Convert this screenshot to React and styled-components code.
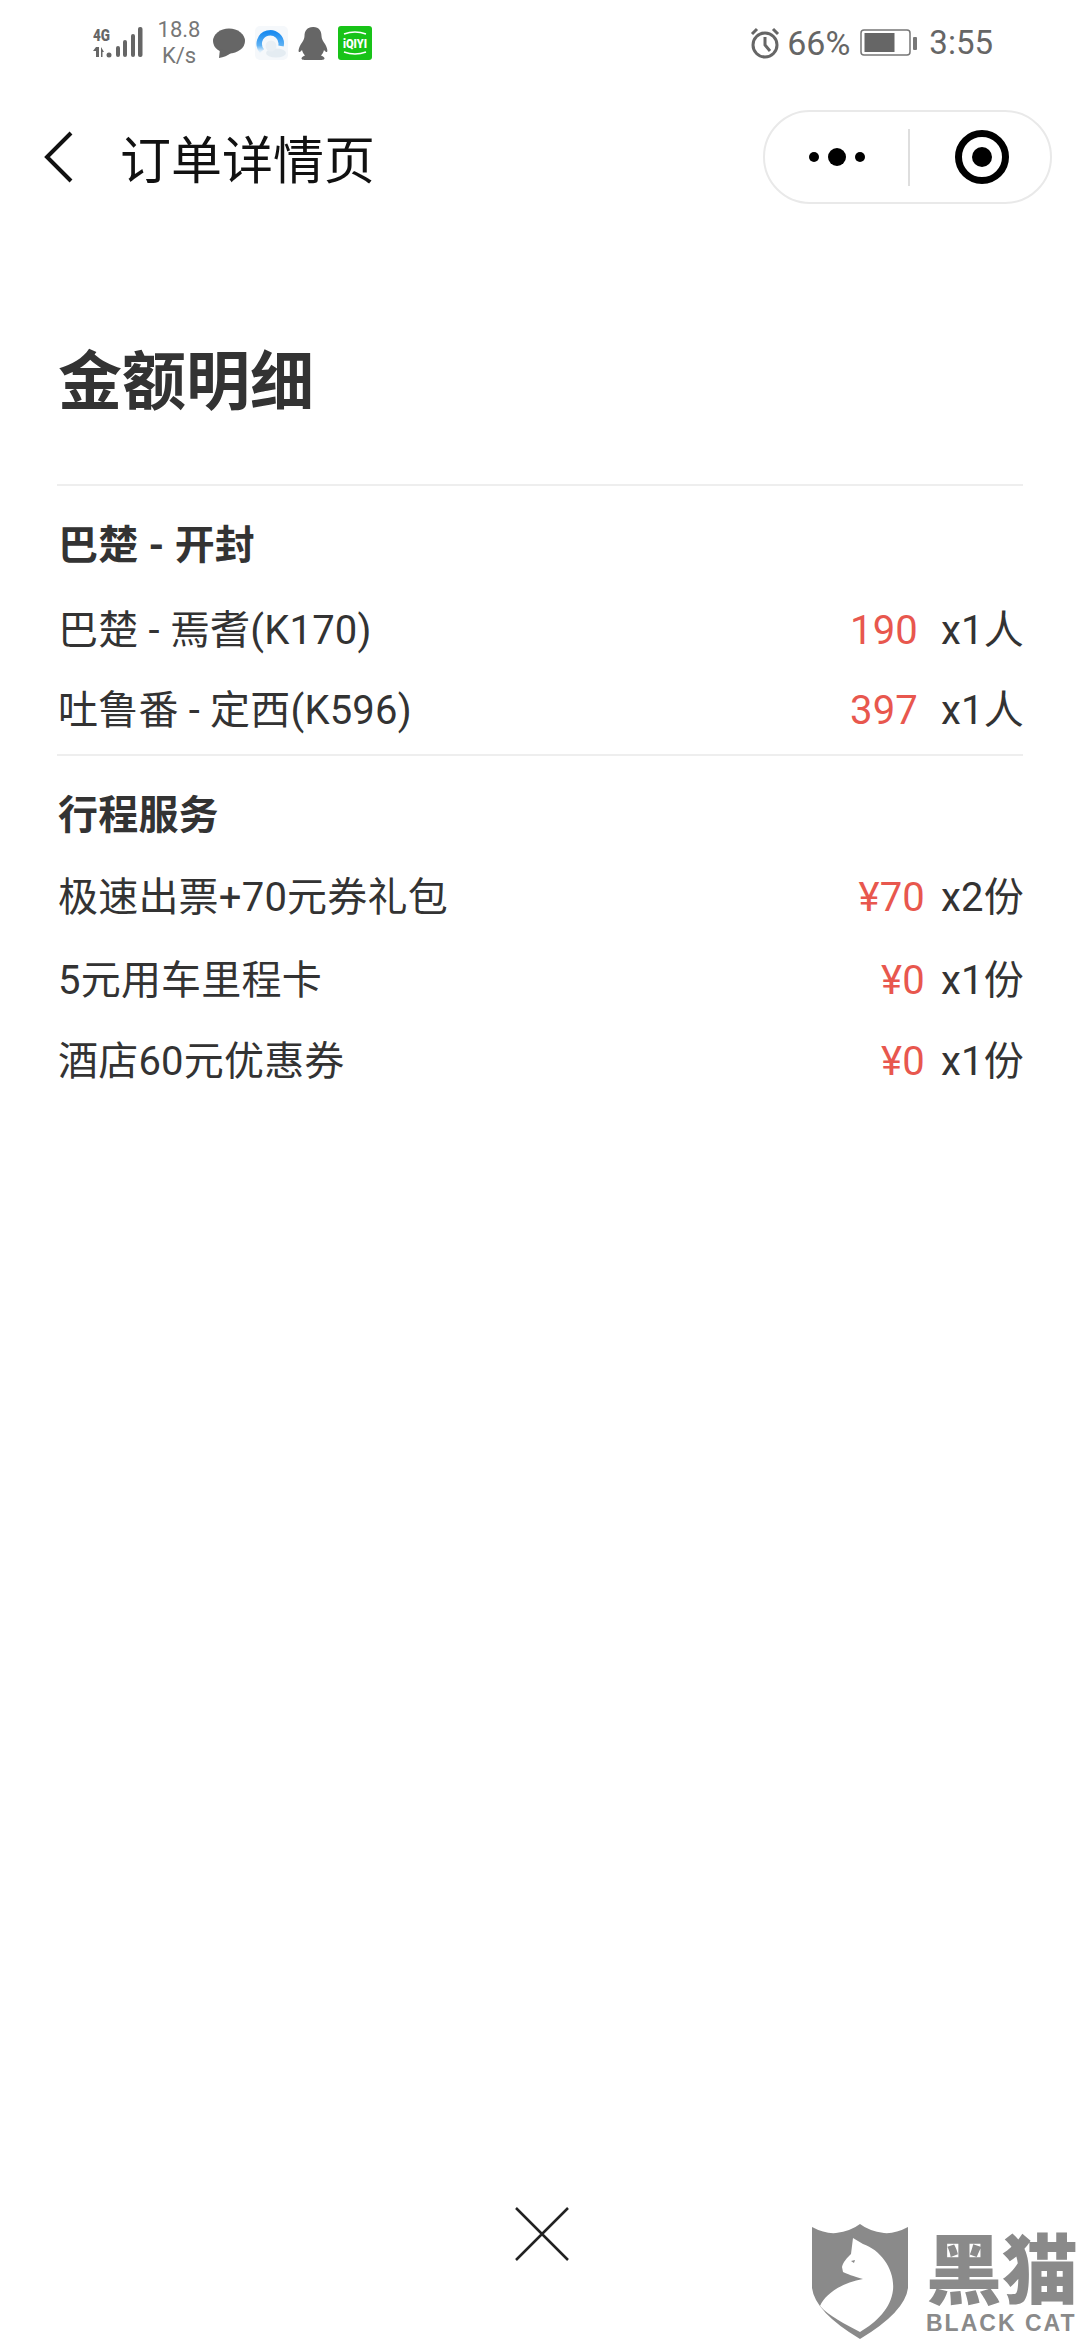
import React from "react";
import styled, { createGlobalStyle } from "styled-components";

const Global = createGlobalStyle`
  html, body { margin: 0; padding: 0; background: #fff; }
  body { font-family: Roboto, "Noto Sans CJK SC", sans-serif; }
  * { box-sizing: border-box; }
`;

const Page = styled.div`
  position: relative;
  width: 1080px;
  height: 2340px;
  overflow: hidden;
  background: #fff;
  display: flex;
  flex-direction: column;
`;

const StatusBar = styled.div`
  height: 86px;
  padding: 0 87px 0 93px;
  display: flex;
  align-items: center;
  justify-content: space-between;
  color: #666;
`;
const StatusGroup = styled.div`
  display: flex;
  align-items: center;
`;
const Speed = styled.div`
  width: 44px;
  margin: 0 12px 0 14px;
  font-size: 22px;
  line-height: 26px;
  text-align: center;
  color: #777;
  white-space: nowrap;
`;
const StatusText = styled.span`
  font-size: ${(p) => p.$size}px;
  line-height: 40px;
  color: #666;
  margin: ${(p) => p.$margin || 0};
`;
const Tiny = styled.text`
  font-family: Roboto, sans-serif;
  font-weight: 900;
`;

const Nav = styled.div`
  height: 94px;
  margin-top: 24px;
  padding: 0 28px 0 44px;
  display: flex;
  align-items: center;
`;
const NavTitle = styled.h1`
  margin: 10px 0 0 46px;
  font-size: 51px;
  font-weight: 400;
  line-height: 60px;
  color: #111;
  flex: 1;
`;
const Capsule = styled.div`
  width: 289px;
  height: 94px;
  border: 2px solid #e9e9e9;
  border-radius: 47px;
  display: flex;
  align-items: center;
`;
const CapsuleLeft = styled.div`
  width: 143px;
  display: flex;
  align-items: center;
  justify-content: center;
`;
const CapsuleRight = styled.div`
  flex: 1;
  padding-left: 4px;
  display: flex;
  align-items: center;
  justify-content: center;
`;
const CapsuleDivider = styled.div`
  width: 2px;
  height: 57px;
  background: #dedede;
`;

const Content = styled.main`
  padding: 0 57px;
  color: #333;
`;
const Heading = styled.h2`
  margin: 0;
  padding: 136px 0 0 1px;
  height: 280px;
  font-size: 64px;
  line-height: 86px;
  font-weight: 700;
  color: #333;
`;
const Rule = styled.div`
  height: 2px;
  background: #eeeeee;
  width: 966px;
`;
const SectionTitle = styled.h3`
  margin: 0;
  padding: ${(p) => p.$top}px 0 0 1px;
  height: ${(p) => p.$height}px;
  display: flex;
  align-items: center;
  font-size: 40px;
  font-weight: 700;
  color: #333;
  letter-spacing: 0.2px;
`;
const RowGroup = styled.div`
  padding-bottom: ${(p) => p.$bottom || 0}px;
`;
const Row = styled.div`
  height: ${(p) => p.$height}px;
  line-height: ${(p) => p.$height + 5}px;
  padding-left: 1px;
  display: flex;
  align-items: baseline;
  font-size: 40px;
  letter-spacing: 0.2px;
  color: #333;
`;
const Name = styled.span`
  flex: 1;
`;
const Amount = styled.span`
  color: #e8574e;
  margin-right: ${(p) => p.$gap}px;
`;
const Qty = styled.span`
  width: 82px;
  white-space: nowrap;
`;

const Spacer = styled.div`
  flex: 1;
`;
const Close = styled.div`
  display: flex;
  justify-content: center;
  padding: 0 0 78px 3px;
`;

const Watermark = styled.div`
  position: absolute;
  left: 811px;
  top: 2224px;
  display: flex;
  gap: 15px;
  color: #8a8a8a;
`;
const MarkText = styled.div`
  display: flex;
  flex-direction: column;
  padding: 10px 0 0 2px;
`;
const MarkCn = styled.div`
  font-size: 76px;
  line-height: 76px;
  font-weight: 900;
  white-space: nowrap;
`;
const MarkEn = styled.div`
  font-family: "Liberation Sans", sans-serif;
  font-size: 23px;
  font-weight: 700;
  line-height: 26px;
  letter-spacing: 2px;
  white-space: nowrap;
`;

const Signal = () => (
  <svg width="50" height="32" viewBox="0 0 50 32" fill="#666">
    <Tiny x="0" y="14" fontSize="16" textLength="17" lengthAdjust="spacingAndGlyphs">4G</Tiny>
    <path d="M3 20h3v10H3zM0 24l3-4v4zM8 30V20l3 5H9.500v5z" />
    <circle cx="16" cy="28" r="2.500" />
    <rect x="23" y="19" width="4" height="11" rx="2" />
    <rect x="30" y="13" width="4" height="17" rx="2" />
    <rect x="38" y="7" width="4" height="23" rx="2" />
    <rect x="45" y="0" width="4.500" height="30" rx="2" />
  </svg>
);
const Bubble = () => (
  <svg width="32" height="30" viewBox="0 0 32 30" fill="#666" style={{ marginRight: 10 }}>
    <ellipse cx="16" cy="13" rx="16" ry="12.500" />
    <path d="M7 21 L6 30 Q13 29 18 25z" />
  </svg>
);
const Browser = () => (
  <svg width="33" height="34" viewBox="0 0 33 34" style={{ marginRight: 10 }}>
    <defs>
      <linearGradient id="bg" x1="0" y1="0" x2="0" y2="1">
        <stop offset="0" stopColor="#1c8cf0" />
        <stop offset="0.7" stopColor="#5fb2f4" />
        <stop offset="1" stopColor="#dcedfa" />
      </linearGradient>
    </defs>
    <rect width="33" height="34" rx="5" fill="#f5f8fb" />
    <path d="M7 25 A11 11 0 1 1 26 20" fill="none" stroke="url(#bg)" strokeWidth="5.500" />
    <ellipse cx="21" cy="27" rx="10" ry="4.500" fill="#e4ecf2" />
    <circle cx="16" cy="20" r="5.500" fill="#e9eff4" />
  </svg>
);
const Penguin = () => (
  <svg width="30" height="33" viewBox="0 0 30 33" fill="#666" style={{ marginRight: 10 }}>
    <path d="M15 0C9 0 6.500 4 6.500 9c0 3-1.500 5-3.500 8-2 3.500-3 7-2 8 1 .5 2-1 3-2 .5 2 1.500 4 3 5.500-2.500 1-3.500 2-3.500 3 0 1.500 3 1.500 6 1.500h11c3 0 6 0 6-1.500 0-1-1-2-3.500-3 1.500-1.500 2.500-3.500 3-5.500 1 1 2 2.500 3 2 1-1 0-4.500-2-8-2-3-3.500-5-3.500-8 0-5-2.500-9-8-9z" />
  </svg>
);
const Iqiyi = () => (
  <svg width="34" height="34" viewBox="0 0 34 34">
    <rect width="34" height="34" rx="3" fill="#18c318" />
    <path d="M6 8Q17 4 28 8M6 26Q17 30 28 26" fill="none" stroke="#fff" strokeWidth="1.500" />
    <Tiny x="5" y="22" fontSize="12" textLength="24" lengthAdjust="spacingAndGlyphs" fill="#fff">iQIYI</Tiny>
  </svg>
);
const Alarm = () => (
  <svg width="30" height="32" viewBox="0 0 30 32" fill="none" stroke="#666" strokeWidth="3" style={{ marginRight: 7 }}>
    <circle cx="15" cy="18" r="12" />
    <path d="M15 10v8l5 6M2 7l5-5M28 7l-5-5" />
  </svg>
);
const Battery = () => (
  <svg width="58" height="28" viewBox="0 0 58 28">
    <rect x="1" y="1" width="49" height="25" rx="3" fill="none" stroke="#777" strokeWidth="1.500" />
    <rect x="4.500" y="4" width="30" height="19" fill="#666" />
    <rect x="53" y="8" width="4" height="13" rx="1" fill="#777" />
  </svg>
);
const Back = () => (
  <svg width="30" height="52" viewBox="0 0 30 52" fill="none" stroke="#111" strokeWidth="4">
    <path d="M27 2 L3 26 L27 50" />
  </svg>
);
const Dots = () => (
  <svg width="66" height="20" viewBox="0 0 66 20" fill="#000">
    <circle cx="10" cy="10" r="5" />
    <circle cx="33" cy="10" r="9" />
    <circle cx="56" cy="10" r="5" />
  </svg>
);
const Target = () => (
  <svg width="54" height="54" viewBox="0 0 54 54">
    <circle cx="27" cy="27" r="23.500" fill="none" stroke="#000" strokeWidth="7" />
    <circle cx="27" cy="27" r="10" fill="#000" />
  </svg>
);
const CloseIcon = () => (
  <svg width="56" height="56" viewBox="0 0 56 56" stroke="#222" strokeWidth="2.500">
    <path d="M2 2 L54 54 M54 2 L2 54" />
  </svg>
);
const Shield = () => (
  <svg width="98" height="116" viewBox="0 0 98 116">
    <path d="M1 3 Q14 10 25 9 Q40 7 49 0 Q58 7 73 9 Q84 10 97 3 V64 Q94 88 49 115 Q4 88 1 64z" fill="#8a8a8a" />
    <path d="M42 14 L52 20 C70 26 84 46 82 66 C80 84 66 98 49 108 C34 100 18 92 9 82 C14 70 32 58 52 55 C42 52 36 50 32 48 L31 43 C32 38 36 34 40 30z" fill="#fff" />
    <path d="M40 37l4-1-1 3z" fill="#8a8a8a" />
  </svg>
);

const tickets = [
  { name: "巴楚 - 焉耆(K170)", amount: "190", qty: "x1人", gap: 23, h: 80 },
  { name: "吐鲁番 - 定西(K596)", amount: "397", qty: "x1人", gap: 23, h: 80 },
];
const services = [
  { name: "极速出票+70元券礼包", amount: "¥70", qty: "x2份", gap: 16, h: 84 },
  { name: "5元用车里程卡", amount: "¥0", qty: "x1份", gap: 16, h: 82 },
  { name: "酒店60元优惠券", amount: "¥0", qty: "x1份", gap: 16, h: 80 },
];

const Item = ({ r }) => (
  <Row $height={r.h}>
    <Name>{r.name}</Name>
    <Amount $gap={r.gap}>{r.amount}</Amount>
    <Qty>{r.qty}</Qty>
  </Row>
);

export default function App() {
  return (
    <Page>
      <Global />
      <StatusBar>
        <StatusGroup>
          <Signal />
          <Speed>18.8<br />K/s</Speed>
          <Bubble />
          <Browser />
          <Penguin />
          <Iqiyi />
        </StatusGroup>
        <StatusGroup>
          <Alarm />
          <StatusText $size={34} $margin="0 10px 0 0">66%</StatusText>
          <Battery />
          <StatusText $size={33} $margin="0 0 0 11px">3:55</StatusText>
        </StatusGroup>
      </StatusBar>
      <Nav>
        <Back />
        <NavTitle>订单详情页</NavTitle>
        <Capsule>
          <CapsuleLeft><Dots /></CapsuleLeft>
          <CapsuleDivider />
          <CapsuleRight><Target /></CapsuleRight>
        </Capsule>
      </Nav>
      <Content>
        <Heading>金额明细</Heading>
        <Rule />
        <SectionTitle $height={102} $top={9}>巴楚 - 开封</SectionTitle>
        <RowGroup $bottom={6}>
          {tickets.map((r) => <Item key={r.name} r={r} />)}
        </RowGroup>
        <Rule />
        <SectionTitle $height={97} $top={14}>行程服务</SectionTitle>
        <RowGroup>
          {services.map((r) => <Item key={r.name} r={r} />)}
        </RowGroup>
      </Content>
      <Spacer />
      <Close><CloseIcon /></Close>
      <Watermark>
        <Shield />
        <MarkText>
          <MarkCn>黑猫</MarkCn>
          <MarkEn>BLACK CAT</MarkEn>
        </MarkText>
      </Watermark>
    </Page>
  );
}
